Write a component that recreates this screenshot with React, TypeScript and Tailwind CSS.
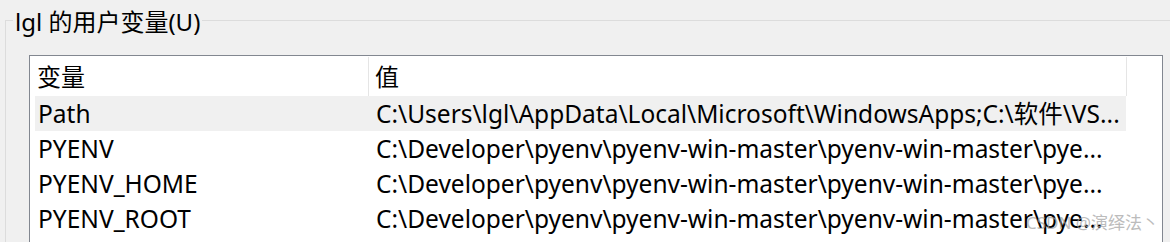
import React from "react";

const rows = [
  { name: "Path", value: "C:\\Users\\lgl\\AppData\\Local\\Microsoft\\WindowsApps;C:\\软件\\VS...", selected: true },
  { name: "PYENV", value: "C:\\Developer\\pyenv\\pyenv-win-master\\pyenv-win-master\\pye..." },
  { name: "PYENV_HOME", value: "C:\\Developer\\pyenv\\pyenv-win-master\\pyenv-win-master\\pye..." },
  { name: "PYENV_ROOT", value: "C:\\Developer\\pyenv\\pyenv-win-master\\pyenv-win-master\\pye..." },
];

export default function App() {
  return (
    <div
      className="relative w-[1170px] h-[242px] overflow-hidden bg-[#f0f0f0] text-black"
      style={{ fontFamily: '"Noto Sans", "Noto Sans CJK SC", sans-serif' }}
    >
      <div className="relative ml-[5px] mt-[20px] h-[300px] border-t border-l border-[#dcdcdc]">
        <div className="absolute left-[7px] top-[-12px] bg-[#f0f0f0] px-[2px] text-[24px] leading-[26px]">
          lgl 的用户变量(U)
        </div>
        <div className="ml-[23px] mt-[34px] w-[1134px] h-[260px] border border-[#828790] bg-white pl-[5px] pt-0">
          <div className="flex h-[40px] w-[1092px] text-[24px] leading-[40px]">
            <div className="w-[334px] pl-[2px] border-r border-[#e5e5e5] mt-[1px]">变量</div>
            <div className="flex-1 pl-[6px] border-r border-[#e5e5e5] mt-[1px]">值</div>
          </div>
          {rows.map((r) => (
            <div
              key={r.name}
              className={`flex h-[35px] w-[1091px] text-[24.5px] leading-[35px] whitespace-nowrap ${
                r.selected ? "bg-[#f0f0f0]" : ""
              }`}
            >
              <div className="w-[335px] pl-[3px]">{r.name}</div>
              <div className="flex-1 pl-[6px] overflow-hidden">{r.value}</div>
            </div>
          ))}
        </div>
      </div>
      <div className="absolute left-[1026px] top-[211px] text-[17px] leading-[24px] text-[#a0a0a0] opacity-70 whitespace-nowrap">
        CSDN @演绎法丶
      </div>
    </div>
  );
}
